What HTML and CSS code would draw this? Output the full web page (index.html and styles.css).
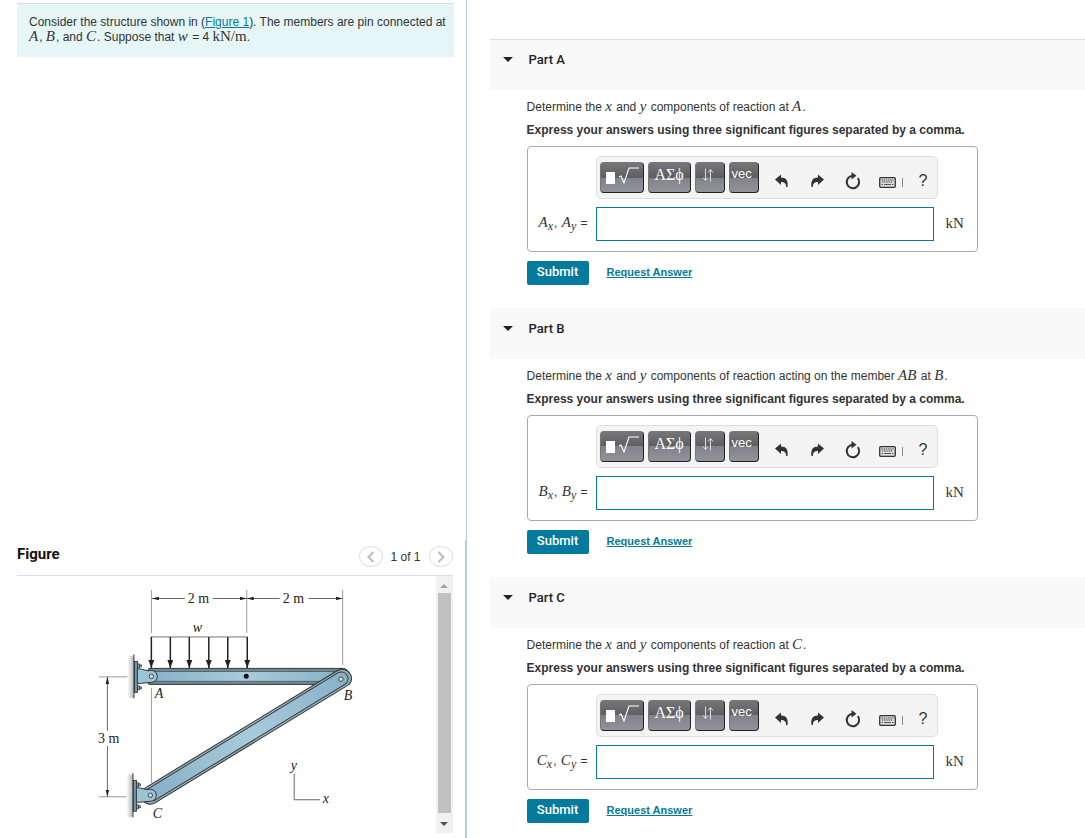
FILE: index.html
```
<!DOCTYPE html>
<html lang="en">
<head>
    <meta charset="UTF-8">
    <meta name="viewport" content="width=device-width, initial-scale=1.0">
    <title>Structure reactions</title>
    <link rel="stylesheet" href="styles.css">
</head>
<body>
    <!-- shared toolbar icons -->
    <svg class="icon-defs" aria-hidden="true">
        <symbol id="icon-root" viewBox="0 0 34 20">
            <rect x="1" y="6" width="9" height="12" fill="#fff"/>
            <path d="M14 11l2-1 3 7 5-15h10" fill="none" stroke="#fff" stroke-width="1.100"/>
        </symbol>
        <symbol id="icon-arrows" viewBox="0 0 12 14">
            <path d="M3.500 0.500v12M1 9.500l2.500 3 2.500-3M8.500 13.500v-12M6 4.500l2.500-3 2.500 3" fill="none" stroke="#ddd" stroke-width="1"/>
        </symbol>
        <symbol id="icon-undo" viewBox="0 0 14 14">
            <path d="M0 5.500L6 0.500v3c5 0 7.500 3 6.500 9.500h-1.500c0.300-3.500-1.500-5-5-5v3z" fill="#333"/>
        </symbol>
        <symbol id="icon-redo" viewBox="0 0 14 14">
            <path d="M14 5.500L8 0.500v3c-5 0-7.500 3-6.500 9.500h1.500c-0.300-3.500 1.500-5 5-5v3z" fill="#333"/>
        </symbol>
        <symbol id="icon-reset" viewBox="0 0 16 18">
            <path d="M7.500 3.800a6.200 6.200 0 1 0 5.300 2.300" fill="none" stroke="#333" stroke-width="2"/>
            <path d="M6.500 0l5 3.800-5 3.700z" fill="#333"/>
        </symbol>
        <symbol id="icon-keyboard" viewBox="0 0 17 11">
            <rect x="0.700" y="0.700" width="15.600" height="9.600" rx="1" fill="#ddd" stroke="#333" stroke-width="1.300"/>
            <path d="M2.500 3h12M3 5h11" stroke="#333" stroke-width="1.200" stroke-dasharray="1.300 0.900"/>
            <path d="M2.500 7.500h1.500M5 7.500h7M13 7.500h1.500" stroke="#555" stroke-width="1.200"/>
        </symbol>
    </svg>

    <div class="page">
        <aside class="left-pane">
            <div class="problem">
                Consider the structure shown in (<a href="#figure">Figure 1</a>). The members are pin connected at
                <i>A</i>, <i>B</i>, and <i>C</i>. Suppose that <i>w</i> = 4 <span class="unit">kN/m</span>.
            </div>

            <section class="figure" id="figure">
                <div class="figure-header">
                    <h2>Figure</h2>
                    <div class="pager">
                        <button type="button" aria-label="Previous figure"><svg viewBox="0 0 8 12"><path d="M6.500 1L1.500 6l5 5"/></svg></button>
                        <span>1 of 1</span>
                        <button type="button" aria-label="Next figure"><svg viewBox="0 0 8 12"><path d="M1.500 1l5 5-5 5"/></svg></button>
                    </div>
                </div>
                <div class="figure-body">
                    <svg class="diagram" viewBox="17 576 419 257">
                        <defs>
                            <linearGradient id="steel" x1="0" y1="0" x2="1" y2="0">
                                <stop offset="0" stop-color="#86b1c7"/>
                                <stop offset="0.500" stop-color="#a9cbdb"/>
                                <stop offset="1" stop-color="#86b1c7"/>
                            </linearGradient>
                            <linearGradient id="wall" x1="0" y1="0" x2="1" y2="0">
                                <stop offset="0" stop-color="#fff"/>
                                <stop offset="1" stop-color="#bbb"/>
                            </linearGradient>
                            <marker id="tip" viewBox="0 0 8 4" markerWidth="7" markerHeight="4" markerUnits="userSpaceOnUse" refX="8" refY="2" orient="auto">
                                <path d="M0 0l8 2-8 2z" fill="#222"/>
                            </marker>
                            <marker id="load" viewBox="0 0 8 6" markerWidth="8" markerHeight="6" markerUnits="userSpaceOnUse" refX="8" refY="3" orient="auto">
                                <path d="M0 0l8 3-8 3z" fill="#222"/>
                            </marker>
                            <g id="support">
                                <rect x="-24" y="-21" width="6" height="43" rx="3" fill="url(#wall)"/>
                                <path d="M-17.500-22v44" stroke="#444" stroke-width="1.200"/>
                                <rect x="-17" y="-15" width="3" height="31" fill="#6d9bb2" stroke="#222" stroke-width="0.800"/>
                                <g fill="#999" stroke="#333" stroke-width="0.700">
                                    <rect x="-14" y="-12.500" width="2" height="4"/>
                                    <rect x="-12" y="-11.500" width="2" height="2"/>
                                    <rect x="-14" y="9.500" width="2" height="4"/>
                                    <rect x="-12" y="10.500" width="2" height="2"/>
                                </g>
                                <path d="M-14-7.500h3l8 2a6 6 0 0 1 3-0.500a6 6 0 0 1 0 12l-11 1h-3z" fill="#9cc3d6" stroke="#333"/>
                                <circle r="2.200" fill="#ddd" stroke="#444"/>
                            </g>
                        </defs>

                        <!-- dimensions -->
                        <g stroke="#999">
                            <path d="M151.500 590v43M247 590v43M343 590v75M151.500 688v95M99 677h31M99 797h31"/>
                        </g>
                        <g stroke="#666" fill="none">
                            <path d="M185 598.500H152" marker-end="url(#tip)"/>
                            <path d="M213 598.500h34" marker-end="url(#tip)"/>
                            <path d="M280 598.500h-33" marker-end="url(#tip)"/>
                            <path d="M309 598.500h34" marker-end="url(#tip)"/>
                            <path d="M107.500 731v-54" marker-end="url(#tip)"/>
                            <path d="M107.500 746v51" marker-end="url(#tip)"/>
                            <path d="M294.500 774v26h26"/>
                        </g>

                        <!-- beam AB -->
                        <path d="M149 668.500H344a8 8 0 0 1 6 8V684.500H149q-5-8 0-16z" fill="#6d8c9b" stroke="#333"/>
                        <path d="M149 671.500H343V681.500H149z" fill="url(#steel)" stroke="#444" stroke-width="0.700"/>
                        <circle cx="246.500" cy="676.300" r="2.500" fill="#111"/>

                        <!-- beam CB, drawn flat and turned about C -->
                        <g transform="translate(150.500 795.500) rotate(-31.400)">
                            <path d="M0-9H225a9 9 0 0 1 9 9v1a8 8 0 0 1-9 8H0a9 9 0 0 1 0-18z" fill="#8fabb9" stroke="#333"/>
                            <path d="M0-6.700H224a6.700 6.700 0 0 1 0 13.400H0z" fill="url(#steel)" stroke="#333" stroke-width="0.900"/>
                        </g>
                        <circle cx="341.300" cy="679.300" r="2.200" fill="#ddd" stroke="#444"/>

                        <use href="#support" x="151.500" y="676.500"/>
                        <use href="#support" x="150.500" y="795.500"/>

                        <!-- distributed load -->
                        <path d="M151 637h97" stroke="#777"/>
                        <g stroke="#222" stroke-width="1.500">
                            <path d="M151.500 637v31" marker-end="url(#load)"/>
                            <path d="M170.500 637v31" marker-end="url(#load)"/>
                            <path d="M189.500 637v31" marker-end="url(#load)"/>
                            <path d="M209 637v31" marker-end="url(#load)"/>
                            <path d="M228 637v31" marker-end="url(#load)"/>
                            <path d="M247.500 637v31" marker-end="url(#load)"/>
                        </g>

                        <g class="diagram-text">
                            <text x="188" y="603">2 m</text>
                            <text x="283" y="603">2 m</text>
                            <text x="98" y="743">3 m</text>
                            <text class="var" x="193" y="632">w</text>
                            <text class="var" x="155" y="698">A</text>
                            <text class="var" x="344" y="700">B</text>
                            <text class="var" x="153" y="818">C</text>
                            <text class="var" x="291" y="770">y</text>
                            <text class="var" x="323" y="803">x</text>
                        </g>
                    </svg>
                    <div class="scrollbar">
                        <span class="arrow arrow-up"></span>
                        <span class="thumb"></span>
                        <span class="arrow arrow-down"></span>
                    </div>
                </div>
            </section>
        </aside>

        <main class="right-pane">
            <section class="part">
                <h3 class="part-header"><span class="caret"></span>Part A</h3>
                <form class="part-body">
                    <p>Determine the <i>x</i> and <i>y</i> components of reaction at <i>A</i>.</p>
                    <p><b>Express your answers using three significant figures separated by a comma.</b></p>
                    <div class="answer-box">
                        <div class="toolbar">
                            <button type="button" class="key key-wide" aria-label="Templates"><svg class="root"><use href="#icon-root"/></svg></button>
                            <button type="button" class="key key-greek">ΑΣϕ</button>
                            <button type="button" class="key" aria-label="Subscripts"><svg class="arrows"><use href="#icon-arrows"/></svg></button>
                            <button type="button" class="key">vec</button>
                            <div class="tools">
                                <button type="button" aria-label="Undo"><svg class="turn"><use href="#icon-undo"/></svg></button>
                                <button type="button" aria-label="Redo"><svg class="turn"><use href="#icon-redo"/></svg></button>
                                <button type="button" aria-label="Reset"><svg class="reset"><use href="#icon-reset"/></svg></button>
                                <button type="button" class="keyboard" aria-label="Keyboard shortcuts"><svg><use href="#icon-keyboard"/></svg><span class="bar"></span></button>
                                <button type="button" class="help">?</button>
                            </div>
                        </div>
                        <label for="answer-a"><i>A<sub>x</sub></i>, <i>A<sub>y</sub></i> =</label>
                        <input type="text" id="answer-a">
                        <span class="unit">kN</span>
                    </div>
                    <div class="actions">
                        <button type="submit" class="submit">Submit</button>
                        <a href="#">Request Answer</a>
                    </div>
                </form>
            </section>

            <section class="part">
                <h3 class="part-header"><span class="caret"></span>Part B</h3>
                <form class="part-body">
                    <p>Determine the <i>x</i> and <i>y</i> components of reaction acting on the member <i>AB</i> at <i>B</i>.</p>
                    <p><b>Express your answers using three significant figures separated by a comma.</b></p>
                    <div class="answer-box">
                        <div class="toolbar">
                            <button type="button" class="key key-wide" aria-label="Templates"><svg class="root"><use href="#icon-root"/></svg></button>
                            <button type="button" class="key key-greek">ΑΣϕ</button>
                            <button type="button" class="key" aria-label="Subscripts"><svg class="arrows"><use href="#icon-arrows"/></svg></button>
                            <button type="button" class="key">vec</button>
                            <div class="tools">
                                <button type="button" aria-label="Undo"><svg class="turn"><use href="#icon-undo"/></svg></button>
                                <button type="button" aria-label="Redo"><svg class="turn"><use href="#icon-redo"/></svg></button>
                                <button type="button" aria-label="Reset"><svg class="reset"><use href="#icon-reset"/></svg></button>
                                <button type="button" class="keyboard" aria-label="Keyboard shortcuts"><svg><use href="#icon-keyboard"/></svg><span class="bar"></span></button>
                                <button type="button" class="help">?</button>
                            </div>
                        </div>
                        <label for="answer-b"><i>B<sub>x</sub></i>, <i>B<sub>y</sub></i> =</label>
                        <input type="text" id="answer-b">
                        <span class="unit">kN</span>
                    </div>
                    <div class="actions">
                        <button type="submit" class="submit">Submit</button>
                        <a href="#">Request Answer</a>
                    </div>
                </form>
            </section>

            <section class="part">
                <h3 class="part-header"><span class="caret"></span>Part C</h3>
                <form class="part-body">
                    <p>Determine the <i>x</i> and <i>y</i> components of reaction at <i>C</i>.</p>
                    <p><b>Express your answers using three significant figures separated by a comma.</b></p>
                    <div class="answer-box">
                        <div class="toolbar">
                            <button type="button" class="key key-wide" aria-label="Templates"><svg class="root"><use href="#icon-root"/></svg></button>
                            <button type="button" class="key key-greek">ΑΣϕ</button>
                            <button type="button" class="key" aria-label="Subscripts"><svg class="arrows"><use href="#icon-arrows"/></svg></button>
                            <button type="button" class="key">vec</button>
                            <div class="tools">
                                <button type="button" aria-label="Undo"><svg class="turn"><use href="#icon-undo"/></svg></button>
                                <button type="button" aria-label="Redo"><svg class="turn"><use href="#icon-redo"/></svg></button>
                                <button type="button" aria-label="Reset"><svg class="reset"><use href="#icon-reset"/></svg></button>
                                <button type="button" class="keyboard" aria-label="Keyboard shortcuts"><svg><use href="#icon-keyboard"/></svg><span class="bar"></span></button>
                                <button type="button" class="help">?</button>
                            </div>
                        </div>
                        <label for="answer-c"><i>C<sub>x</sub></i>, <i>C<sub>y</sub></i> =</label>
                        <input type="text" id="answer-c">
                        <span class="unit">kN</span>
                    </div>
                    <div class="actions">
                        <button type="submit" class="submit">Submit</button>
                        <a href="#">Request Answer</a>
                    </div>
                </form>
            </section>
        </main>
    </div>
</body>
</html>
```
FILE: styles.css
```
* {
    box-sizing: border-box;
}

body {
    margin: 0;
    font-family: "Liberation Sans", Arial, sans-serif;
    font-size: 12px;
    color: #333;
    background: #fff;
}

a {
    color: #047a9c;
}

button {
    font-family: inherit;
    cursor: pointer;
}

/* math variables and units */
i, .unit {
    font-family: "Liberation Serif", "Times New Roman", serif;
    font-size: 15px;
    line-height: 12px;
}

i {
    padding-right: 1px;
}

.icon-defs {
    display: none;
}

.page {
    display: grid;
    grid-template-columns: 43% 1fr;
    height: 100vh;
}

/* left side */
.left-pane {
    display: flex;
    flex-direction: column;
    justify-content: space-between;
    min-height: 0;
    padding-top: 3px;
    border-right: 1px solid #b7cadc;
}

.problem {
    margin: 0 12px 0 17px;
    padding: 11px 4px 12px 12px;
    line-height: 15px;
    background: #e6f6f7;
    border-top: 1px solid #d5dfe2;
}

.figure {
    padding: 0 12px 5px 17px;
    border-right: 1px solid #b7cadc;
}

.figure-header {
    display: flex;
    justify-content: space-between;
    align-items: center;
    height: 36px;
    padding-bottom: 2px;
    border-bottom: 1px solid #ddd;
}

.figure-header h2 {
    margin: 0 0 6px;
    font-family: Roboto, sans-serif;
    font-size: 15px;
    line-height: 20px;
    color: #111;
}

.pager {
    display: flex;
    align-items: center;
    gap: 8px;
}

.pager button {
    display: flex;
    align-items: center;
    justify-content: center;
    width: 24px;
    height: 21px;
    padding: 0;
    background: #fff;
    border: 1px solid #e2e2e2;
    border-radius: 50%;
}

.pager svg {
    width: 8px;
    height: 12px;
    fill: none;
    stroke: #bbb;
    stroke-width: 2;
}

.figure-body {
    display: flex;
}

.diagram {
    flex: 1;
    min-width: 0;
}

.diagram-text {
    font-family: "Liberation Serif", "Times New Roman", serif;
    font-size: 14px;
    fill: #222;
}

.diagram-text .var {
    font-style: italic;
}

.scrollbar {
    display: flex;
    flex-direction: column;
    align-items: center;
    width: 17px;
    background: #f1f1f1;
}

.thumb {
    flex: 1;
    width: 13px;
    background: #c1c1c1;
}

.arrow {
    border: 4px solid transparent;
}

.arrow-up {
    margin-bottom: 5px;
    border-top-width: 8px;
    border-bottom-color: #a3a3a3;
}

.arrow-down {
    margin-top: 9px;
    border-top-color: #505050;
    border-bottom-width: 7px;
}

/* right side */
.right-pane {
    min-height: 0;
    padding: 39px 0 0 23px;
    overflow-y: auto;
    scrollbar-width: none;
}

.part-header {
    display: flex;
    align-items: center;
    gap: 16px;
    height: 51px;
    margin: 0;
    padding: 0 13px 10px;
    font-family: Roboto, sans-serif;
    font-size: 13px;
    font-weight: 500;
    color: #222;
    background: #f9f9f9;
}

.part:first-child .part-header {
    padding-bottom: 12px;
    border-top: 1px solid #ddd;
}

.caret {
    border: 5px solid transparent;
    border-top-color: #222;
    border-bottom: 0;
}

.part-body {
    padding: 6px 37px 23px;
}

.part-body p {
    margin: 0;
    line-height: 23px;
}

.answer-box {
    display: grid;
    grid-template-columns: 68px 1fr 43px;
    row-gap: 8px;
    align-items: center;
    max-width: 451px;
    margin-top: 4px;
    padding: 9px 0 10px;
    border: 1px solid #aaa;
    border-radius: 4px;
}

.toolbar {
    grid-column: 2 / 4;
    display: flex;
    align-items: center;
    gap: 4px;
    height: 43px;
    margin-right: 39px;
    padding: 0 3px;
    background: #f4f4f4;
    border: 1px solid #ddd;
    border-radius: 5px;
}

.key {
    display: flex;
    justify-content: center;
    flex: none;
    width: 30px;
    height: 31px;
    padding: 2px 4px 0 0;
    font-size: 13px;
    line-height: 18px;
    color: #fff;
    background: linear-gradient(#767679, #5e5e61 50%, #82828a 50%, #92929b);
    border: 1px solid #555;
    border-color: #777 #222 #222 #777;
    border-radius: 4px;
}

.key-wide, .key-greek {
    width: 44px;
    padding: 3px 0 0;
}

.key-greek {
    width: 43px;
    font-family: "Liberation Serif", "Times New Roman", serif;
    font-size: 16px;
}

.root {
    width: 34px;
    height: 20px;
}

.arrows {
    width: 12px;
    height: 14px;
    margin-top: 3px;
}

.tools {
    display: flex;
    flex: 1;
    align-items: center;
    gap: 16px;
    height: 24px;
    margin-top: 6px;
    padding-left: 12px;
}

.tools button {
    display: flex;
    align-items: center;
    padding: 0;
    color: #333;
    background: none;
    border: 0;
}

.turn {
    width: 14px;
    height: 14px;
    margin-right: 5px;
}

.reset {
    width: 16px;
    height: 18px;
    margin-right: 2px;
}

.tools .keyboard {
    padding-top: 4px;
}

.keyboard svg {
    width: 17px;
    height: 11px;
}

.bar {
    width: 1px;
    height: 9px;
    margin-left: 6px;
    background: #888;
}

.tools .help {
    font-size: 16px;
}

.answer-box label {
    padding: 0 8px 2px 0;
    text-align: right;
    white-space: nowrap;
}

.answer-box i {
    padding: 0 1px;
}

.answer-box sub {
    font-size: 12px;
    line-height: 0;
    vertical-align: -3px;
}

.answer-box input {
    width: 100%;
    height: 34px;
    padding: 0 8px;
    font-size: 14px;
    border: 1px solid #047a9c;
    outline: 0;
}

.answer-box > .unit {
    padding: 0 0 2px 12px;
}

.actions {
    display: flex;
    align-items: center;
    gap: 18px;
    margin-top: 9px;
}

.submit {
    width: 62px;
    height: 24px;
    padding: 0 0 3px;
    font-family: Roboto, sans-serif;
    font-size: 13px;
    font-weight: 500;
    color: #fff;
    background: #047a9c;
    border: 0;
    border-radius: 2px;
}

.actions a {
    padding-bottom: 2px;
    font-size: 11px;
    font-weight: bold;
}
```
